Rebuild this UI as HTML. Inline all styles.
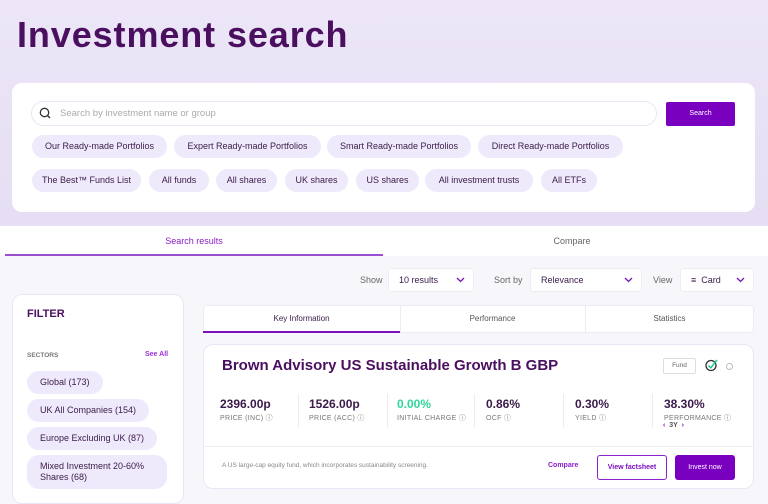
<!DOCTYPE html>
<html><head><style>
*{box-sizing:border-box;margin:0;padding:0}
body{width:768px;height:496px;overflow:hidden;font-family:"Liberation Sans",sans-serif;background:#f7f7fb;position:relative;color:#3a1a4a}
.top{position:absolute;left:0;top:0;width:768px;height:226px;background:linear-gradient(180deg,#ece6f8,#e6def4)}
h1{position:absolute;left:17px;top:14px;font-size:36px;font-weight:bold;color:#4a0f5e;letter-spacing:0.9px}
.card{position:absolute;background:#fff;border-radius:10px}
.chip{position:absolute;height:23px;border-radius:12px;background:#efeafb;font-size:9px;line-height:23px;text-align:center;color:#3a1a4a}
.abs{position:absolute}
.sel{position:absolute;top:268px;height:24px;background:#fff;border:1px solid #ececf2;border-radius:3px;font-size:9px;line-height:22px;padding-left:10px;color:#3a1a4a}
.chev{position:absolute;right:8px;top:8px}
.lbl{position:absolute;top:275px;font-size:9px;color:#666}
.stat{position:absolute;top:397px;font-size:12px;font-weight:bold;color:#3a1a4a}
.sl{position:absolute;top:413px;font-size:7px;color:#777;letter-spacing:.3px}
.div{position:absolute;top:394px;width:1px;height:34px;background:#ececf4}
.sc{position:absolute;left:27px;height:23px;border-radius:12px;background:#efeafb;font-size:9px;line-height:23px;padding:0 13px;color:#3a1a4a}
</style></head><body>
<div class="top"></div>
<h1>Investment search</h1>
<div class="card" style="left:12px;top:83px;width:743px;height:129px"></div>
<div class="abs" style="left:31px;top:101px;width:626px;height:25px;border:1px solid #ebe6f5;border-radius:13px;background:#fff"></div>
<svg class="abs" style="left:39px;top:107px" width="12" height="13"><circle cx="5.5" cy="5.5" r="4.2" fill="none" stroke="#333" stroke-width="1.3"/><path d="M8.5 8.5L11 11" stroke="#333" stroke-width="1.3"/></svg>
<div class="abs" style="left:60px;top:108px;font-size:9.5px;color:#aaa">Search by investment name or group</div>
<div class="abs" style="left:666px;top:102px;width:69px;height:24px;background:#7a00c0;border-radius:2px;color:#fff;font-size:7px;line-height:24px;text-align:center">Search</div>
<div class="chip" style="left:32px;top:135px;width:135px">Our Ready-made Portfolios</div>
<div class="chip" style="left:174px;top:135px;width:147px">Expert Ready-made Portfolios</div>
<div class="chip" style="left:327px;top:135px;width:144px">Smart Ready-made Portfolios</div>
<div class="chip" style="left:478px;top:135px;width:145px">Direct Ready-made Portfolios</div>
<div class="chip" style="left:32px;top:169px;width:109px">The Best™ Funds List</div>
<div class="chip" style="left:149px;top:169px;width:60px">All funds</div>
<div class="chip" style="left:216px;top:169px;width:61px">All shares</div>
<div class="chip" style="left:285px;top:169px;width:63px">UK shares</div>
<div class="chip" style="left:356px;top:169px;width:63px">US shares</div>
<div class="chip" style="left:425px;top:169px;width:108px">All investment trusts</div>
<div class="chip" style="left:541px;top:169px;width:56px">All ETFs</div>
<div class="abs" style="left:0;top:226px;width:768px;height:30px;background:#fff"></div>
<div class="abs" style="left:5px;top:236px;width:378px;text-align:center;font-size:9px;color:#8a20c8">Search results</div>
<div class="abs" style="left:5px;top:254px;width:378px;height:2px;background:#9a50d0"></div>
<div class="abs" style="left:383px;top:236px;width:378px;text-align:center;font-size:9px;color:#666">Compare</div>
<div class="lbl" style="left:360px">Show</div>
<div class="sel" style="left:388px;width:86px">10 results<svg class="chev" width="9" height="6"><path d="M1 1l3.5 3.5L8 1" fill="none" stroke="#7a10c0" stroke-width="1.3"/></svg></div>
<div class="lbl" style="left:494px">Sort by</div>
<div class="sel" style="left:530px;width:112px">Relevance<svg class="chev" width="9" height="6"><path d="M1 1l3.5 3.5L8 1" fill="none" stroke="#7a10c0" stroke-width="1.3"/></svg></div>
<div class="lbl" style="left:653px">View</div>
<div class="sel" style="left:680px;width:74px">≡ &nbsp;Card<svg class="chev" width="9" height="6"><path d="M1 1l3.5 3.5L8 1" fill="none" stroke="#7a10c0" stroke-width="1.3"/></svg></div>
<div class="card" style="left:12px;top:294px;width:172px;height:210px;border:1px solid #ebe6f5"></div>
<div class="abs" style="left:27px;top:308px;font-size:11px;font-weight:bold;color:#4a0f5e">FILTER</div>
<div class="abs" style="left:27px;top:352px;font-size:6.5px;color:#777;font-weight:bold">SECTORS</div>
<div class="abs" style="left:145px;top:351px;font-size:7px;color:#9a30d8;font-weight:bold">See All</div>
<div class="sc" style="top:371px">Global (173)</div>
<div class="sc" style="top:399px">UK All Companies (154)</div>
<div class="sc" style="top:427px">Europe Excluding UK (87)</div>
<div class="sc" style="top:455px;height:34px;line-height:11px;padding-top:6px;width:140px">Mixed Investment 20-60% Shares (68)</div>
<div class="abs" style="left:203px;top:305px;width:551px;height:28px;background:#fff;border:1px solid #ececf2;border-radius:4px"></div>
<div class="abs" style="left:400px;top:305px;width:1px;height:28px;background:#ececf2"></div>
<div class="abs" style="left:585px;top:305px;width:1px;height:28px;background:#ececf2"></div>
<div class="abs" style="left:203px;top:314px;width:197px;text-align:center;font-size:8px;color:#3a1a4a">Key Information</div>
<div class="abs" style="left:203px;top:331px;width:197px;height:2px;background:#7a10c0"></div>
<div class="abs" style="left:400px;top:314px;width:185px;text-align:center;font-size:8px;color:#555">Performance</div>
<div class="abs" style="left:585px;top:314px;width:169px;text-align:center;font-size:8px;color:#555">Statistics</div>
<div class="card" style="left:203px;top:344px;width:551px;height:145px;border:1px solid #ebe6f5"></div>
<div class="abs" style="left:222px;top:357px;font-size:15px;font-weight:bold;color:#4a0f5e">Brown Advisory US Sustainable Growth B GBP</div>
<div class="abs" style="left:663px;top:358px;width:33px;height:16px;border:1px solid #ddd;border-radius:2px;font-size:6.5px;line-height:14px;text-align:center;color:#666">Fund</div>
<svg class="abs" style="left:705px;top:358px" width="14" height="14"><circle cx="6" cy="7.5" r="5" fill="none" stroke="#333" stroke-width="1.3"/><path d="M3.5 7.5l2.3 2.3L12 2" fill="none" stroke="#1bc88a" stroke-width="1.5"/></svg>
<div class="abs" style="left:726px;top:363px;width:7px;height:7px;border:1px solid #bbb;border-radius:50%"></div>
<div class="stat" style="left:220px">2396.00p</div><div class="sl" style="left:220px">PRICE (INC) ⓘ</div>
<div class="div" style="left:298px"></div>
<div class="stat" style="left:309px">1526.00p</div><div class="sl" style="left:309px">PRICE (ACC) ⓘ</div>
<div class="div" style="left:387px"></div>
<div class="stat" style="left:397px;color:#2fd79a">0.00%</div><div class="sl" style="left:397px">INITIAL CHARGE ⓘ</div>
<div class="div" style="left:474px"></div>
<div class="stat" style="left:486px">0.86%</div><div class="sl" style="left:486px">OCF ⓘ</div>
<div class="div" style="left:563px"></div>
<div class="stat" style="left:575px">0.30%</div><div class="sl" style="left:575px">YIELD ⓘ</div>
<div class="div" style="left:652px"></div>
<div class="stat" style="left:664px">38.30%</div><div class="sl" style="left:664px">PERFORMANCE ⓘ</div>
<div class="abs" style="left:663px;top:422px;font-size:7px;color:#7a10c0;font-weight:bold">‹ &nbsp;<span style="color:#555">3Y</span>&nbsp; ›</div>
<div class="abs" style="left:204px;top:446px;width:549px;height:1px;background:#f0eef5"></div>
<div class="abs" style="left:222px;top:462px;font-size:6.5px;color:#888">A US large-cap equity fund, which incorporates sustainability screening.</div>
<div class="abs" style="left:548px;top:462px;font-size:7px;color:#8a20c8;font-weight:bold">Compare</div>
<div class="abs" style="left:597px;top:455px;width:70px;height:25px;border:1px solid #8a20c8;border-radius:3px;font-size:7px;line-height:23px;text-align:center;color:#7a10c0;font-weight:bold">View factsheet</div>
<div class="abs" style="left:675px;top:455px;width:60px;height:25px;background:#7a00c0;border-radius:3px;font-size:7px;line-height:25px;text-align:center;color:#fff">Invest now</div>
</body></html>
